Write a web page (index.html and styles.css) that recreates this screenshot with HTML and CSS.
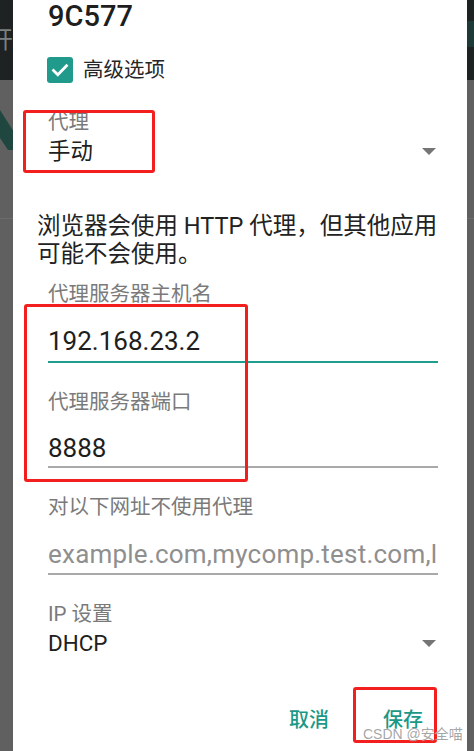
FILE: index.html
```html
<!DOCTYPE html>
<html lang="zh-CN">
<head>
<meta charset="utf-8">
<title>代理设置</title>
<link rel="stylesheet" href="styles.css">
</head>
<body>
<div class="screen">
  <div class="backdrop">
    <div class="appbar"><span class="appbar-title">开</span><span class="appbar-icon"></span></div>
    <div class="backdrop-body">
      <svg class="bg-icon" width="14" height="44" viewBox="0 0 14 44"><polygon points="0,0 14,22 14,40 8,40 0,28" fill="#20473f"/></svg>
      <div class="bg-divider"></div>
    </div>
  </div>

  <div class="dialog">
    <div class="title">9C577</div>

    <div class="check-row">
      <span class="checkbox"><svg width="26" height="26" viewBox="0 0 26 26"><path d="M6.5 13.5l4.3 4.3 8.7-9" fill="none" stroke="#fff" stroke-width="2.8" stroke-linecap="square"/></svg></span>
      <span class="check-label">高级选项</span>
    </div>

    <div class="select select-proxy">
      <div class="field-label">代理</div>
      <div class="select-row">
        <span class="select-value">手动</span>
        <svg class="arrow" width="14" height="7" viewBox="0 0 14 7"><polygon points="0,0 14,0 7,7" fill="#757575"/></svg>
      </div>
    </div>

    <p class="desc">浏览器会使用 HTTP 代理，但其他应用<br>可能不会使用。</p>

    <div class="field field-host">
      <div class="field-label">代理服务器主机名</div>
      <div class="field-input focused">192.168.23.2</div>
    </div>

    <div class="field">
      <div class="field-label">代理服务器端口</div>
      <div class="field-input">8888</div>
    </div>

    <div class="field">
      <div class="field-label">对以下网址不使用代理</div>
      <div class="field-input hint">example.com,mycomp.test.com,localhost</div>
    </div>

    <div class="select">
      <div class="field-label">IP 设置</div>
      <div class="select-row">
        <span class="select-value">DHCP</span>
        <svg class="arrow" width="14" height="7" viewBox="0 0 14 7"><polygon points="0,0 14,0 7,7" fill="#757575"/></svg>
      </div>
    </div>

    <div class="actions">
      <span class="btn">取消</span>
      <span class="btn">保存</span>
    </div>
  </div>

  <div class="mark mark-proxy"></div>
  <div class="mark mark-server"></div>
  <div class="mark mark-save"></div>
  <div class="watermark">CSDN @安全喵</div>
</div>
</body>
</html>
```

FILE: styles.css
```css
* { box-sizing: border-box; }

html, body {
  margin: 0;
  padding: 0;
}

body {
  font-family: Roboto, "Noto Sans CJK SC", sans-serif;
  background: #5f5f5f;
}

.screen {
  position: relative;
  width: 474px;
  height: 751px;
  overflow: hidden;
}

/* dimmed app behind the dialog */
.backdrop {
  display: flex;
  flex-direction: column;
  height: 100%;
}

.appbar {
  height: 80px;
  background: #1e2222;
  display: flex;
  align-items: center;
  justify-content: space-between;
}

.appbar-title {
  font-size: 24px;
  color: #7d8080;
  margin-left: -11px;
  margin-top: -6px;
}

.appbar-icon {
  width: 12px;
  height: 26px;
  margin-top: -12px;
  border-radius: 6px 0 0 6px;
  background: #1d3a38;
}

.backdrop-body {
  flex: 1;
  background: #606060;
  padding-top: 30px;
}

.bg-icon {
  display: block;
}

.bg-divider {
  margin-top: 64px;
  height: 1px;
  background: #6c6c6c;
}

/* dialog */
.dialog {
  position: absolute;
  top: 0;
  left: 13px;
  width: 454px;
  height: 751px;
  background: #ffffff;
  padding: 0 29px 0 35px;
  color: #212121;
}

.title {
  font-size: 29px;
  line-height: 33px;
  font-weight: 500;
  color: #1e1e1e;
}

.check-row {
  display: flex;
  align-items: center;
  height: 26px;
  margin-top: 24px;
  margin-left: -1px;
}

.checkbox {
  width: 26px;
  height: 26px;
  border-radius: 3px;
  background: #1f9a8b;
  display: flex;
}

.check-label {
  margin-left: 10px;
  font-size: 20.5px;
  line-height: 26px;
  color: #262626;
}

.field-label {
  font-size: 20.5px;
  line-height: 24px;
  color: #7a7a7a;
  white-space: nowrap;
}

.select {
  margin-top: 27px;
}

.select-row {
  display: flex;
  align-items: center;
  justify-content: space-between;
  margin-top: 3px;
}

.select-value {
  font-size: 22.4px;
  line-height: 28px;
  color: #202020;
}

.arrow {
  display: block;
  margin-right: 2px;
}

.desc {
  margin: 47px 0 0 -11px;
  font-size: 23.5px;
  line-height: 28px;
  color: #222222;
  white-space: nowrap;
}

.field {
  margin-top: 27px;
}

.field-host {
  margin-top: 14px;
}

.field-input {
  font-size: 26px;
  line-height: 32px;
  padding: 18px 0 2px;
  border-bottom: 2px solid #a9a9a9;
  white-space: nowrap;
  overflow: hidden;
  color: #1e1e1e;
}

.field-input.focused {
  padding: 19px 0 4px;
  border-bottom-color: #1f9e8e;
}

.field-input.hint {
  padding: 19px 0 3px;
  color: #8f8f8f;
  letter-spacing: 0.22px;
}

.actions {
  display: flex;
  justify-content: flex-end;
  gap: 24px;
  margin-top: 49px;
}

.btn {
  padding: 0 15px;
  font-size: 20px;
  line-height: 28px;
  font-weight: 500;
  color: #1c9887;
}

/* annotation overlays */
.mark {
  position: absolute;
  border: 3px solid #f31e1e;
  border-radius: 3px;
}

.mark-proxy {
  left: 23px;
  top: 110px;
  width: 132px;
  height: 63px;
}

.mark-server {
  left: 24px;
  top: 304px;
  width: 224px;
  height: 178px;
}

.mark-save {
  left: 353px;
  top: 687px;
  width: 84px;
  height: 56px;
}

.watermark {
  position: absolute;
  left: 363px;
  top: 726px;
  font-family: "Liberation Sans", "Noto Sans CJK SC", sans-serif;
  font-size: 14px;
  line-height: 17px;
  color: rgba(150, 150, 150, 0.85);
  text-shadow: 0 0 1px rgba(255, 255, 255, 0.9);
  white-space: nowrap;
}
```
